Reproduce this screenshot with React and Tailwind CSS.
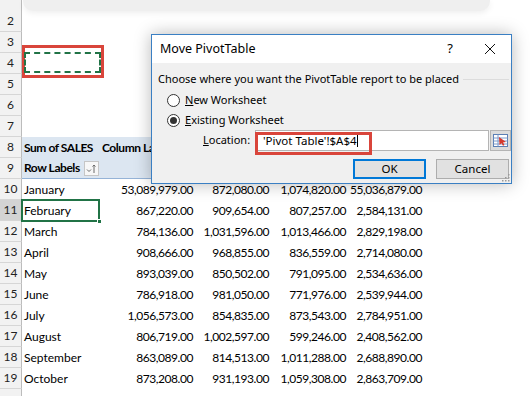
import React from 'react';

const data = [
  ['January', '53,089,979.00', '872,080.00', '1,074,820.00', '55,036,879.00'],
  ['February', '867,220.00', '909,654.00', '807,257.00', '2,584,131.00'],
  ['March', '784,136.00', '1,031,596.00', '1,013,466.00', '2,829,198.00'],
  ['April', '908,666.00', '968,855.00', '836,559.00', '2,714,080.00'],
  ['May', '893,039.00', '850,502.00', '791,095.00', '2,534,636.00'],
  ['June', '786,918.00', '981,050.00', '771,976.00', '2,539,944.00'],
  ['July', '1,056,573.00', '854,835.00', '873,543.00', '2,784,951.00'],
  ['August', '806,719.00', '1,002,597.00', '599,246.00', '2,408,562.00'],
  ['September', '863,089.00', '814,513.00', '1,011,288.00', '2,688,890.00'],
  ['October', '873,208.00', '931,193.00', '1,059,308.00', '2,863,709.00'],
];

function Row({ n, active, children, className = '' }) {
  return (
    <div className="flex h-[21px]">
      <div
        className={`w-[22px] shrink-0 flex items-center justify-center border-r border-b border-r-[#bcbcbc] border-b-[#d6d6d6] text-[12px] text-[#222] ${
          active ? 'bg-[#d3d3d3]' : 'bg-[#f2f2f2]'
        }`}
      >
        {n}
      </div>
      <div className={`flex items-center ${className}`}>{children}</div>
    </div>
  );
}

function Num({ w, children }) {
  return (
    <div className={`${w} text-right pr-[3px] tracking-[-0.45px] whitespace-nowrap`}>{children}</div>
  );
}

function Radio({ checked }) {
  return (
    <span className="w-[13px] h-[13px] rounded-full border border-[#333] bg-white flex items-center justify-center shrink-0">
      {checked && <span className="w-[7px] h-[7px] rounded-full bg-[#333]" />}
    </span>
  );
}

export default function App() {
  return (
    <div className="relative w-[530px] h-[396px] overflow-hidden bg-white font-['Lato',sans-serif] text-[12px] text-black">
      {/* row 1 strip, covered by the grey panel */}
      <div className="flex h-[11px]">
        <div className="w-[22px] shrink-0 bg-[#f2f2f2] border-r border-[#bcbcbc]" />
        <div className="ml-[1px] w-[467px] h-[11px] bg-[#efefef] rounded-b-[10px] shadow-[0_2px_6px_rgba(0,0,0,0.07)]" />
      </div>

      <Row n="2" />
      <Row n="3" />
      <Row n="4" />
      <Row n="5" />
      <Row n="6" />
      <Row n="7" />

      {/* pivot header rows */}
      <Row n="8" className="w-[403px] bg-[#dce6f1] font-bold tracking-[-0.45px]">
        <div className="w-[78px] pl-[2px] whitespace-nowrap">Sum of SALES</div>
        <div className="w-[96px] pl-[2px] whitespace-nowrap">Column Labels</div>
      </Row>
      <Row n="9" className="w-[403px] bg-[#dce6f1] border-b border-[#95b3d7] font-bold tracking-[-0.45px]">
        <div className="w-[78px] pl-[2px] flex items-center gap-[4px] whitespace-nowrap">
          Row Labels
          <span className="w-[15px] h-[15px] border border-[#c6c6c6] bg-[#f7f7f7] flex items-center justify-center">
            <svg width="11" height="11" viewBox="0 0 11 11" fill="none" stroke="#6b6b6b" strokeWidth="1">
              <path d="M1 6.5 L3 8.5 L5 6.5" />
              <path d="M8 10 V2 M6.5 3.5 L8 2 L9.5 3.5" />
            </svg>
          </span>
        </div>
      </Row>

      {data.map((r, i) => {
        const n = 10 + i;
        const sel = n === 11;
        return (
          <Row key={n} n={String(n)} active={sel}>
            <div className="relative w-[78px] pl-[2px] h-[21px] flex items-center">
              {r[0]}
              {sel && (
                <>
                  <span className="absolute left-[-1px] top-[-1px] w-[79px] h-[23px] border-2 border-[#217346]" />
                  <span className="absolute right-[-2px] bottom-[-3px] w-[5px] h-[5px] bg-[#217346] border border-white" />
                </>
              )}
            </div>
            <Num w="w-[96px]">{r[1]}</Num>
            <Num w="w-[76px]">{r[2]}</Num>
            <Num w="w-[77px]">{r[3]}</Num>
            <Num w="w-[76px]">{r[4]}</Num>
          </Row>
        );
      })}
      <Row n="" />

      {/* annotation around A4 with marching ants */}
      <div className="absolute left-[22px] top-[45px] w-[82px] h-[33px] border-[3px] border-[#d9453b]" />
      <div className="absolute left-[24px] top-[52px] w-[77px] h-[21px] border-2 border-dashed border-[#217346]" />

      {/* Move PivotTable dialog */}
      <div className="absolute left-[151px] top-[34px] w-[361px] h-[150px] border border-[#3a7fc3] bg-[#f0f0f0] shadow-[0_0_16px_rgba(0,0,0,0.28)] font-['Noto_Sans',sans-serif] text-[11px] text-black flex flex-col">
        <div className="h-[28px] bg-white flex items-center pl-[8px]">
          <span className="text-[12.5px]">Move PivotTable</span>
          <span className="ml-auto mr-[31px] text-[13px]">?</span>
          <svg width="12" height="12" viewBox="0 0 12 12" className="mr-[15px]" stroke="#111" strokeWidth="1">
            <path d="M1 1 L11 11 M11 1 L1 11" />
          </svg>
        </div>

        <div className="flex-1 flex flex-col relative">
          <div className="mt-[8px] h-[16px] pl-[6px] pr-[2px] flex items-center">
            <span className="whitespace-nowrap">Choose where you want the PivotTable report to be placed</span>
            <span className="flex-1 ml-[4px] h-px bg-[#dcdcdc]" />
          </div>

          <div className="mt-[3px] h-[20px] ml-[15px] flex items-center gap-[5px]">
            <Radio />
            <span><span className="underline">N</span>ew Worksheet</span>
          </div>
          <div className="h-[20px] ml-[15px] flex items-center gap-[5px]">
            <Radio checked />
            <span><span className="underline">E</span>xisting Worksheet</span>
          </div>

          <div className="h-[21px] ml-[51px] flex items-center">
            <span className="w-[52px]"><span className="underline">L</span>ocation:</span>
            <div className="relative w-[234px] h-[21px] bg-white border border-[#b4b4b4] flex items-center pl-[7px] text-[11.5px]">
              <span>'Pivot Table'!$A$4</span>
              <span className="w-px h-[13px] bg-black" />
              <span className="absolute left-[-1px] top-[1px] w-[117px] h-[23px] border-[3px] border-[#d9453b]" />
            </div>
            <div className="ml-px w-[21px] h-[21px] bg-[#dcdcdc] border border-[#b4b4b4] flex items-center justify-center">
              <svg width="15" height="13" viewBox="0 0 15 13">
                <rect x="0.5" y="0.5" width="14" height="12" fill="#ffffff" stroke="#5b7fb5" />
                <path d="M0.5 4 H14.5 M0.5 7 H14.5 M0.5 10 H14.5 M5 0.5 V12.5" stroke="#7c9acb" strokeWidth="1" />
                <path d="M6 3 L13 8 L10 8.5 L11.5 11 L10 11.8 L8.5 9.3 L6.5 11 Z" fill="#d43a2f" />
              </svg>
            </div>
          </div>

          <div className="mt-[8px] h-[20px] flex justify-end gap-[10px] pr-[2px]">
            <button className="w-[73px] h-[20px] bg-[#e1e1e1] border-2 border-[#0078d7] flex items-center justify-center text-[11.5px]">OK</button>
            <button className="w-[73px] h-[20px] bg-[#e1e1e1] border border-[#adadad] flex items-center justify-center text-[11.5px]">Cancel</button>
          </div>

          <svg width="8" height="8" viewBox="0 0 8 8" className="absolute right-[1px] bottom-[1px]" fill="#9a9a9a">
            <rect x="6" y="0" width="1.5" height="1.5" />
            <rect x="3" y="3" width="1.5" height="1.5" />
            <rect x="6" y="3" width="1.5" height="1.5" />
            <rect x="0" y="6" width="1.5" height="1.5" />
            <rect x="3" y="6" width="1.5" height="1.5" />
            <rect x="6" y="6" width="1.5" height="1.5" />
          </svg>
        </div>
      </div>
    </div>
  );
}
